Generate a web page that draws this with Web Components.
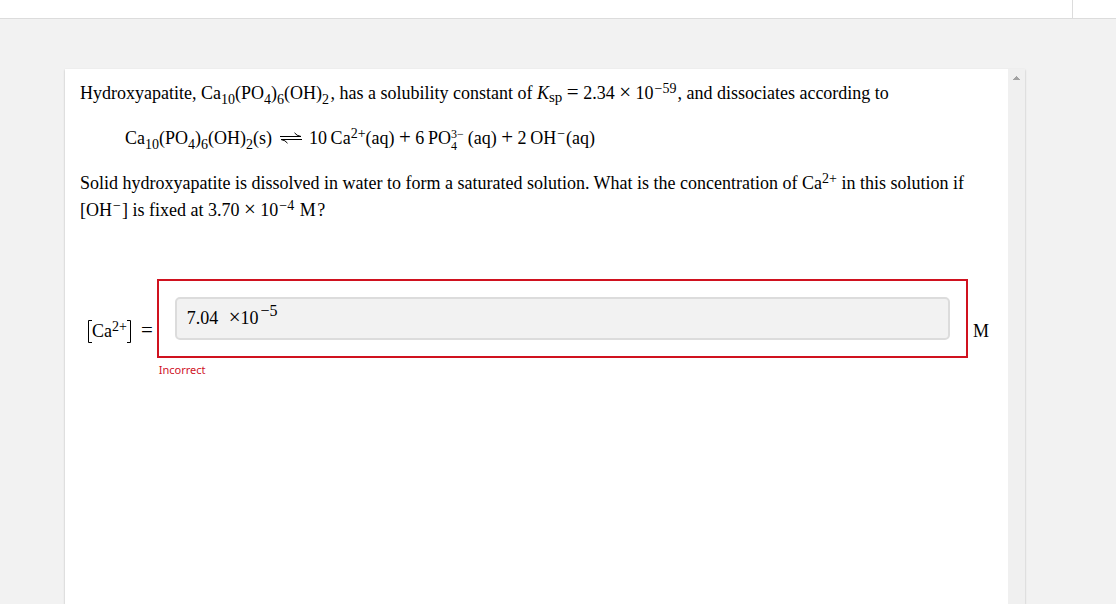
<!DOCTYPE html>
<html lang="en">
<head>
<meta charset="utf-8">
<meta name="viewport" content="width=device-width, initial-scale=1">
<title>Hydroxyapatite solubility</title>
<style>
    html, body {
        margin: 0;
    }
    body {
        background-color: #f2f2f2;
        color: #000;
        font-family: "Liberation Serif", "Times New Roman", serif;
        font-size: 18px;
        line-height: 27px;
    }
</style>
</head>
<body>
<question-page>
    <question-card>
        <question-text></question-text>
        <answer-field coefficient="7.04" exponent="−5" unit="M" feedback="Incorrect"></answer-field>
    </question-card>
</question-page>

<script>
// Shared by every element that prints formulas
const mathStyles = `
    sup, sub {
        font-size: 14px;
        line-height: 0;
    }
    sup {
        vertical-align: 6px;
    }
    sub {
        vertical-align: -5px;
    }
    sub.word {
        font-size: 15px;
        vertical-align: -3px;
    }
    sup.charge {
        margin: 0 1px;
    }
    .op {
        font-size: 21px;
        line-height: 0;
    }
    .formula {
        white-space: nowrap;
    }
    .stack {
        display: inline-grid;
        margin-right: 4px;
        vertical-align: 6px;
    }
    .stack sup, .stack sub {
        margin: 0;
        font-size: 12px;
        line-height: 12px;
        vertical-align: baseline;
    }
`;

class QuestionPage extends HTMLElement {
    constructor() {
        super();
        this.attachShadow({ mode: 'open' });
        this.shadowRoot.innerHTML = `
            <style>
                :host {
                    display: flex;
                    flex-direction: column;
                    min-height: 100vh;
                }
                header {
                    display: flex;
                    justify-content: flex-end;
                    height: 18px;
                    background-color: #fff;
                    border-bottom: 1px solid #dcdcdc;
                }
                .corner {
                    width: 43px;
                    border-left: 1px solid #dcdcdc;
                }
                main {
                    flex: 1;
                    display: flex;
                    padding: 50px 91px 0 65px;
                }
            </style>
            <header><div class="corner"></div></header>
            <main><slot></slot></main>
        `;
    }
}

class QuestionCard extends HTMLElement {
    constructor() {
        super();
        this.attachShadow({ mode: 'open' });
        this.shadowRoot.innerHTML = `
            <style>
                :host {
                    flex: 1;
                    display: flex;
                    background-color: #fff;
                    box-shadow: 0 1px 2px rgba(0, 0, 0, 0.25);
                }
                .content {
                    flex: 1;
                    min-width: 0;
                    padding: 11px 15px;
                }
                .track {
                    display: flex;
                    justify-content: center;
                    width: 17px;
                    padding-top: 7px;
                    box-sizing: border-box;
                    background-color: #f0f0f0;
                }
                svg {
                    display: block;
                }
            </style>
            <div class="content"><slot></slot></div>
            <div class="track">
                <svg width="7" height="4" viewBox="0 0 7 4" shape-rendering="crispEdges" aria-hidden="true">
                    <path d="M3 0h1v1h1v1h1v1h1v1H0V3h1V2h1V1h1z" fill="#a3a3a3"/>
                </svg>
            </div>
        `;
    }
}

class QuestionText extends HTMLElement {
    constructor() {
        super();
        this.attachShadow({ mode: 'open' });
        this.shadowRoot.innerHTML = `
            <style>
                ${mathStyles}
                :host {
                    display: block;
                }
                p {
                    margin: 0 0 18px;
                }
                .reaction {
                    padding-left: 45px;
                }
                .arrow {
                    margin: 0 3px;
                }
            </style>
            <p>Hydroxyapatite, Ca<sub>10</sub>(PO<sub>4</sub>)<sub>6</sub>(OH)<sub>2</sub>&#8202;, has a solubility constant of <i>K</i><sub class="word">sp</sub> <span class="op">=</span> 2.34 <span class="op">×</span> 10<sup class="charge">−59</sup>, and dissociates according to</p>
            <p class="reaction">Ca<sub>10</sub>(PO<sub>4</sub>)<sub>6</sub>(OH)<sub>2</sub>(s)
                <svg class="arrow" width="22" height="12" viewBox="0 0 22 12" role="img" aria-label="in equilibrium with">
                    <path d="M0 4.5H21M14.500 .8Q16.500 3.800 21 4.500M1 7.500H22M1 7.500Q5.500 8.200 7.500 11.200" fill="none" stroke="#000" stroke-width="1"/>
                </svg>
                10&#8201;Ca<sup>2+</sup>(aq) <span class="op">+</span> 6&#8201;PO<span class="stack"><sup>3−</sup><sub>4</sub></span>(aq) <span class="op">+</span> 2&#8201;OH<sup class="charge">−</sup>(aq)</p>
            <p>Solid hydroxyapatite is dissolved in water to form a saturated solution. What is the concentration of Ca<sup>2+</sup> in this solution if <span class="formula">[OH<sup class="charge">−</sup>]</span> is fixed at 3.70 <span class="op">×</span> 10<sup class="charge">−4</sup> M&#8202;?</p>
        `;
    }
}

class AnswerField extends HTMLElement {
    constructor() {
        super();
        this.attachShadow({ mode: 'open' });
        this.render();
    }

    render() {
        const coefficient = this.getAttribute('coefficient');
        const exponent = this.getAttribute('exponent');
        this.shadowRoot.innerHTML = `
            <style>
                ${mathStyles}
                :host {
                    display: grid;
                    grid-template-columns: auto 1fr auto;
                    align-items: center;
                    margin: 55px 4px 0 7px;
                }
                label {
                    display: flex;
                    align-items: center;
                    padding: 26px 4px 0 0;
                    white-space: pre;
                }
                .bracket {
                    display: block;
                }
                .frame {
                    padding: 16px;
                    border: 2px solid #d0121f;
                }
                .box {
                    display: flex;
                    align-items: center;
                    height: 43px;
                    box-sizing: border-box;
                    padding: 0 10px;
                    background-color: #f2f2f2;
                    border: 2px solid #dcdcdc;
                    border-radius: 5px;
                }
                input {
                    margin: 0;
                    padding: 0;
                    border: none;
                    background-color: transparent;
                    color: inherit;
                    font: inherit;
                    outline: none;
                }
                .coefficient {
                    width: 42px;
                }
                .exponent {
                    width: 32px;
                    height: 16px;
                    margin: 0 0 16px 2px;
                    font-size: 16px;
                    line-height: 16px;
                }
                .unit {
                    padding: 26px 0 0 5px;
                }
                .feedback {
                    grid-column: 2;
                    padding: 4px 2px;
                    color: #d0121f;
                    font-family: "Noto Sans", sans-serif;
                    font-size: 11px;
                    line-height: 16px;
                }
            </style>
            <label for="coefficient"><svg class="bracket" width="5" height="23" viewBox="0 0 5 23" aria-hidden="true"><path d="M5 .5H1.500V22.500H5" fill="none" stroke="#000"/></svg><span>Ca<sup>2+</sup></span><svg class="bracket" width="5" height="23" viewBox="0 0 5 23" aria-hidden="true"><path d="M0 .5H3.500V22.500H0" fill="none" stroke="#000"/></svg><span>  <span class="op">=</span></span></label>
            <div class="frame">
                <div class="box">
                    <input class="coefficient" id="coefficient" type="text" value="${coefficient}" readonly>
                    <span><span class="op">×</span>10</span>
                    <input class="exponent" type="text" value="${exponent}" aria-label="Exponent" readonly>
                </div>
            </div>
            <span class="unit">${this.getAttribute('unit')}</span>
            <span class="feedback" role="alert">${this.getAttribute('feedback')}</span>
        `;
    }
}

customElements.define('question-page', QuestionPage);
customElements.define('question-card', QuestionCard);
customElements.define('question-text', QuestionText);
customElements.define('answer-field', AnswerField);
</script>
</body>
</html>
